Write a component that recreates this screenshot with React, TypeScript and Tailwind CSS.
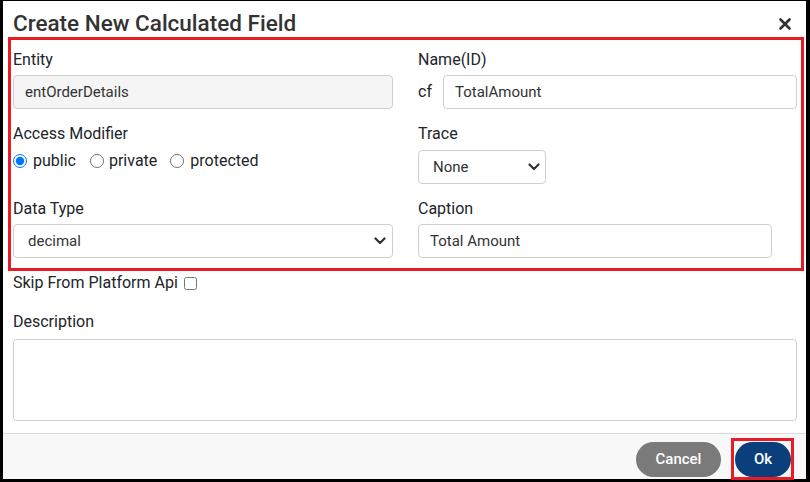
import React from 'react';

const Chevron: React.FC = () => (
  <svg width="12" height="8" viewBox="0 0 12 8" fill="none">
    <path d="M1.5 1.5 6 6l4.5-4.5" stroke="#333" strokeWidth="2.2" strokeLinecap="round" strokeLinejoin="round" />
  </svg>
);

const labelCls = "block h-[18px] text-[16px] leading-[18px] text-[#212529]";

const App: React.FC = () => {
  return (
    <div className="h-[482px] w-[810px] bg-black pt-px pl-[3px] pr-[4px] pb-[3px] font-['Roboto',sans-serif]">
      <div className="relative flex h-full flex-col bg-white">
        {/* header */}
        <div className="flex h-[36px] items-start justify-between pt-[8px] pl-[10px] pr-[15px]">
          <h1 className="text-[22.5px] font-medium leading-[28px] text-[#333]">Create New Calculated Field</h1>
          <button className="mt-[9px] flex h-[12px] w-[12px] items-center justify-center">
            <svg width="12" height="12" viewBox="0 0 12 12">
              <path d="M1.5 1.5l9 9M10.5 1.5l-9 9" stroke="#333" strokeWidth="2.6" strokeLinecap="round" />
            </svg>
          </button>
        </div>

        {/* body */}
        <div className="flex-1 pt-[14px] pl-[10px] pr-[9px]">
          <div className="grid grid-cols-[380px_379px] gap-x-[25px]">
            <div>
              <label className={labelCls}>Entity</label>
              <div className="mt-[6px] flex h-[34px] items-center rounded-[4px] border border-[#cfcfcf] bg-[#f5f5f5] pl-[11px] text-[15px] text-[#333]">
                entOrderDetails
              </div>
            </div>
            <div>
              <label className={labelCls}>Name(ID)</label>
              <div className="mt-[6px] flex h-[34px] items-center">
                <span className="w-[25px] text-[16px] text-[#212529]">cf</span>
                <div className="flex h-full flex-1 items-center rounded-[4px] border border-[#cfcfcf] pl-[11px] text-[15px] text-[#333]">
                  TotalAmount
                </div>
              </div>
            </div>

            <div className="mt-[16px]">
              <label className={labelCls}>Access Modifier</label>
              <div className="mt-[7px] flex h-[22px] items-center text-[16px] text-[#212529]">
                <label className="mr-[14px] flex items-center gap-[6px]">
                  <input type="radio" name="am" defaultChecked className="m-0 h-[14px] w-[14px]" />
                  public
                </label>
                <label className="mr-[13px] flex items-center gap-[5px]">
                  <input type="radio" name="am" className="m-0 h-[14px] w-[14px]" />
                  private
                </label>
                <label className="flex items-center gap-[6px]">
                  <input type="radio" name="am" className="m-0 h-[14px] w-[14px]" />
                  protected
                </label>
              </div>
            </div>
            <div className="mt-[16px]">
              <label className={labelCls}>Trace</label>
              <div className="mt-[7px] flex h-[34px] w-[128px] items-center justify-between rounded-[4px] border border-[#cfcfcf] pl-[14px] pr-[5px] text-[15px] text-[#333]">
                None
                <Chevron />
              </div>
            </div>

            <div className="mt-[16px]">
              <label className={labelCls}>Data Type</label>
              <div className="mt-[6px] flex h-[34px] items-center justify-between rounded-[4px] border border-[#cfcfcf] pl-[14px] pr-[6px] text-[15px] text-[#333]">
                decimal
                <Chevron />
              </div>
            </div>
            <div className="mt-[16px]">
              <label className={labelCls}>Caption</label>
              <div className="mt-[6px] flex h-[34px] w-[354px] items-center rounded-[4px] border border-[#cfcfcf] pl-[11px] text-[15px] text-[#333]">
                Total Amount
              </div>
            </div>
          </div>

          <div className="mt-[16px] flex h-[18px] items-center gap-[6px] text-[16px] text-[#212529]">
            Skip From Platform Api
            <input type="checkbox" className="m-0 h-[13px] w-[13px]" />
          </div>

          <label className={`${labelCls} mt-[21px]`}>Description</label>
          <div className="mt-[8px] h-[82px] rounded-[4px] border border-[#cfcfcf]" />
        </div>

        {/* footer */}
        <div className="flex h-[46px] items-start justify-end gap-[14px] border-t border-[#dcdcdc] bg-[#f8f8f8] pt-[8px] pr-[15px]">
          <button className="h-[35px] w-[85px] rounded-full bg-[#7a7a7a] text-[15px] font-medium text-white">Cancel</button>
          <button className="h-[35px] w-[56px] rounded-full bg-[#0b3f7b] text-[15px] font-medium text-white">Ok</button>
        </div>

        {/* annotation boxes */}
        <div className="pointer-events-none absolute left-[5px] top-[36px] h-[234px] w-[796px] border-[3px] border-[#e81c25]" />
        <div className="pointer-events-none absolute left-[728px] top-[437px] h-[42px] w-[63px] border-[3px] border-[#e81c25]" />
      </div>
    </div>
  );
};

export default App;
